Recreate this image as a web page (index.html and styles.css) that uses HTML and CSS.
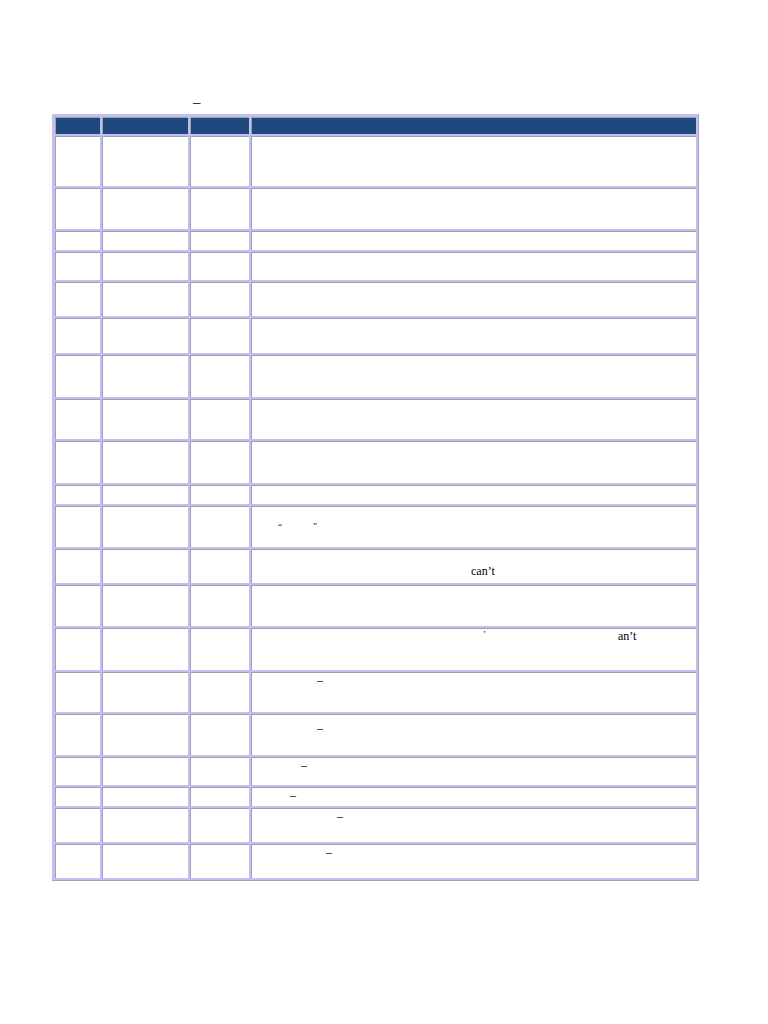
FILE: index.html
```html
<!DOCTYPE html>
<html>
<head>
<meta charset="utf-8">
<link rel="stylesheet" href="styles.css">
</head>
<body>
<div class="page">
  <div class="title"><span>–</span></div>
  <div class="tbl">
    <div class="hd"></div><div class="hd"></div><div class="hd"></div><div class="hd"></div>

    <div class="c"></div><div class="c"></div><div class="c"></div><div class="c"></div>
    <div class="c"></div><div class="c"></div><div class="c"></div><div class="c"></div>
    <div class="c"></div><div class="c"></div><div class="c"></div><div class="c"></div>
    <div class="c"></div><div class="c"></div><div class="c"></div><div class="c"></div>
    <div class="c"></div><div class="c"></div><div class="c"></div><div class="c"></div>
    <div class="c"></div><div class="c"></div><div class="c"></div><div class="c"></div>
    <div class="c"></div><div class="c"></div><div class="c"></div><div class="c"></div>
    <div class="c"></div><div class="c"></div><div class="c"></div><div class="c"></div>
    <div class="c"></div><div class="c"></div><div class="c"></div><div class="c"></div>
    <div class="c"></div><div class="c"></div><div class="c"></div><div class="c"></div>

    <div class="c"></div><div class="c"></div><div class="c"></div>
    <div class="c txt"><div class="line2"><span class="q m26">“</span><span class="q m31">”</span></div></div>

    <div class="c"></div><div class="c"></div><div class="c"></div>
    <div class="c txt"><div class="line2"><span class="m219">can’t</span></div></div>

    <div class="c"></div><div class="c"></div><div class="c"></div><div class="c"></div>

    <div class="c"></div><div class="c"></div><div class="c"></div>
    <div class="c txt"><span class="q m231">’</span><span class="m132">an’t</span></div>

    <div class="c"></div><div class="c"></div><div class="c"></div>
    <div class="c txt"><span class="m65">–</span></div>

    <div class="c"></div><div class="c"></div><div class="c"></div>
    <div class="c txt low"><span class="m65">–</span></div>

    <div class="c"></div><div class="c"></div><div class="c"></div>
    <div class="c txt"><span class="m49">–</span></div>

    <div class="c"></div><div class="c"></div><div class="c"></div>
    <div class="c txt"><span class="m38">–</span></div>

    <div class="c"></div><div class="c"></div><div class="c"></div>
    <div class="c txt"><span class="m85">–</span></div>

    <div class="c"></div><div class="c"></div><div class="c"></div>
    <div class="c txt"><span class="m74">–</span></div>
  </div>
</div>
</body>
</html>
```
FILE: styles.css
```css
html, body {
  margin: 0;
  padding: 0;
  background: #ffffff;
}

.page {
  padding: 92px 0 0 52px;
  font-family: "Liberation Serif", "Times New Roman", serif;
  color: #000;
}

.title {
  height: 22px;
  font-size: 15px;
  line-height: 20px;
  padding-left: 141px;
}

.tbl {
  display: grid;
  width: 647px;
  box-sizing: border-box;
  grid-template-columns: 45px 86px 59px 445px;
  grid-template-rows: 17px 50px 41px 19px 28px 34px 35px 42px 40px 42px 19px 41px 34px 41px 42px 40px 41px 28px 19px 34px 34px;
  gap: 2px;
  padding: 2px;
  background: #c0c0f2;
  border-style: solid;
  border-width: 1px;
  border-color: #c0c0f2 #a3a3b8 #a3a3b8 #c0c0f2;
}

.hd,
.c {
  box-sizing: border-box;
  border-top: 1px solid #a0a0a6;
  border-left: 1px solid #a0a0a6;
}

.hd {
  background: #1f497d;
}

.c {
  background: #ffffff;
}

.txt {
  font-size: 12px;
  line-height: 14px;
  white-space: nowrap;
  overflow: hidden;
}

.txt span {
  display: inline-block;
}

.line2 {
  padding-top: 14px;
}

.low {
  padding-top: 6px;
}

.q {
  font-size: 9px;
  vertical-align: top;
  line-height: 10px;
}

.m26 { margin-left: 26px; }
.m31 { margin-left: 31px; }
.m219 { margin-left: 219px; }
.m231 { margin-left: 231px; }
.m132 { margin-left: 132px; }
.m65 { margin-left: 65px; }
.m49 { margin-left: 49px; }
.m38 { margin-left: 38px; }
.m85 { margin-left: 85px; }
.m74 { margin-left: 74px; }
```
